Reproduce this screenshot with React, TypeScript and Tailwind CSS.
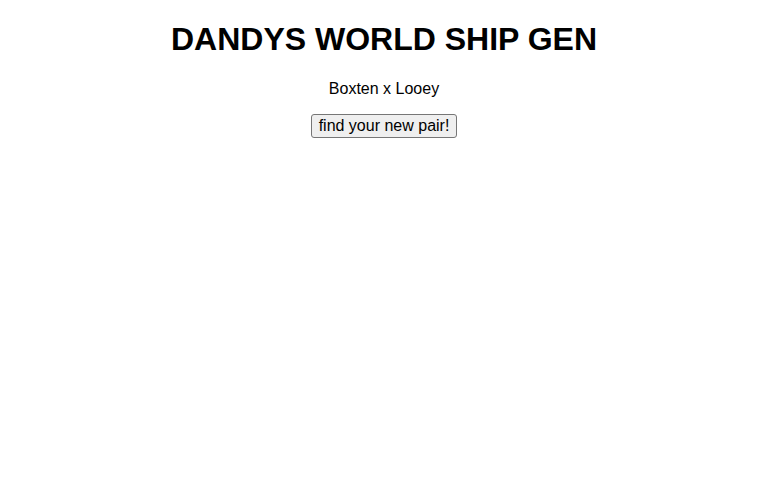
export default function App() {
  return (
    <div className="min-h-[480px] bg-white text-center text-black [font-family:'Liberation_Sans',Arial,sans-serif]">
      <h1 className="pt-[21px] text-[32px] font-bold leading-[37px]">DANDYS WORLD SHIP GEN</h1>
      <p className="mt-[22px] text-base leading-[18px]">Boxten x Looey</p>
      <div className="mt-4">
        <button className="rounded-[3px] border border-[#767676] bg-[#efefef] px-[7px] py-[2px] text-base leading-[18px] hover:bg-[#e5e5e5]">
          find your new pair!
        </button>
      </div>
    </div>
  );
}
